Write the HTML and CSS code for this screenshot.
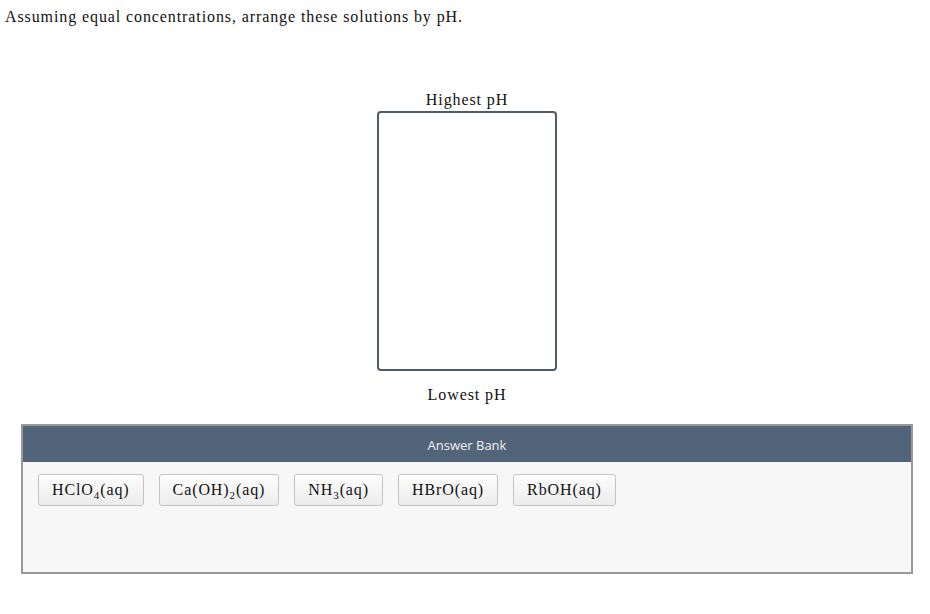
FILE: index.html
```html
<!DOCTYPE html>
<html lang="en">
<head>
    <meta charset="UTF-8">
    <meta name="viewport" content="width=device-width, initial-scale=1.0">
    <title>Ranking: pH</title>
    <link rel="stylesheet" href="styles.css">
</head>
<body>
    <p class="prompt">Assuming equal concentrations, arrange these solutions by pH.</p>

    <div class="ranking">
        <div class="rank-label">Highest pH</div>
        <div class="drop-box" id="dropBox"></div>
        <div class="rank-label">Lowest pH</div>
    </div>

    <div class="bank">
        <div class="bank-header">Answer Bank</div>
        <div class="bank-items">
            <button class="chip">HClO<sub>4</sub>(aq)</button>
            <button class="chip">Ca(OH)<sub>2</sub>(aq)</button>
            <button class="chip">NH<sub>3</sub>(aq)</button>
            <button class="chip">HBrO(aq)</button>
            <button class="chip">RbOH(aq)</button>
        </div>
    </div>
</body>
</html>
```

FILE: styles.css
```css
body {
    margin: 0;
    font-family: "Liberation Serif", "Times New Roman", serif;
    font-size: 16px;
    letter-spacing: 0.9px;
    color: #111;
    background-color: white;
}
.prompt {
    margin: 0;
    padding: 7px 5px 0;
    line-height: 20px;
}
.ranking {
    display: flex;
    flex-direction: column;
    align-items: center;
    margin-top: 63px;
    margin-left: 4px;
}
.rank-label {
    line-height: 20px;
}
.drop-box {
    width: 176px;
    height: 256px;
    border: 2px solid #4f5b66;
    border-radius: 4px;
    margin: 1px 0 14px;
}
.bank {
    margin: 19px 17px 0 21px;
    border: 2px solid #999;
    background-color: #f7f7f7;
    height: 146px;
}
.bank-header {
    background-color: #52647a;
    color: #f0f0f0;
    font-family: "Open Sans", "Liberation Sans", sans-serif;
    font-size: 13px;
    letter-spacing: 0;
    text-align: center;
    height: 36px;
    line-height: 38px;
}
.bank-items {
    display: flex;
    gap: 15px;
    padding: 12px 15px;
}
.chip {
    font-family: "Liberation Serif", "Times New Roman", serif;
    font-size: 16px;
    letter-spacing: 0.9px;
    color: #111;
    height: 32px;
    padding: 0 13px;
    border: 1px solid #c4c4c4;
    border-radius: 3px;
    background: linear-gradient(#fdfdfd, #ececec);
    cursor: pointer;
}
.chip sub {
    font-size: 11px;
    line-height: 0;
    vertical-align: -4px;
}
```
